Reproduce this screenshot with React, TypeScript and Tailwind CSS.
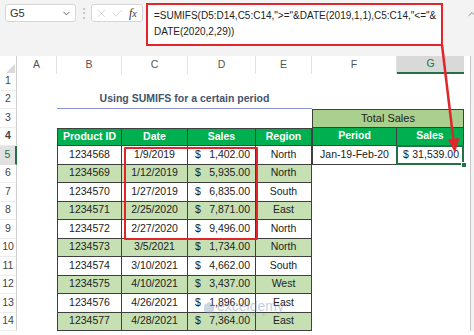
import { Check, ChevronDown, ChevronUp, X } from "lucide-react";

const data = [
  ["1234568", "1/9/2019", "1,402.00", "North"],
  ["1234569", "1/12/2019", "5,935.00", "North"],
  ["1234570", "1/27/2019", "6,835.00", "South"],
  ["1234571", "2/25/2020", "7,871.00", "East"],
  ["1234572", "2/27/2020", "9,496.00", "North"],
  ["1234573", "3/5/2021", "1,734.00", "North"],
  ["1234574", "3/10/2021", "4,662.00", "South"],
  ["1234575", "4/10/2021", "3,437.00", "West"],
  ["1234576", "4/26/2021", "1,896.00", "East"],
  ["1234577", "4/28/2021", "7,364.00", "East"],
];

const grid =
  "grid grid-cols-[17px_40px_65px_66px_68px_56px_85px_67px_6px_1px_1fr]";

function RowNum({ n, active }: { n: number; active?: boolean }) {
  return (
    <div
      className={
        active
          ? "flex items-center justify-center bg-[#e1e1e1] border-r-2 border-r-[#217346] border-b border-b-[#e1e1e1] text-[#217346]"
          : "flex items-center justify-center bg-white border-r border-r-[#cfcfcf] border-b border-b-[#ececec] text-[#444]"
      }
    >
      {n}
    </div>
  );
}

function Tail() {
  return (
    <>
      <div className="bg-white" />
      <div className="bg-[#c8c8c8]" />
      <div className="bg-[#f3f3f3]" />
    </>
  );
}

export default function App() {
  return (
    <div className="relative w-[474px] h-[335px] overflow-hidden bg-white font-['Liberation_Sans',Arial,sans-serif] text-[10.5px] text-[#222]">
      {/* formula bar */}
      <div className="h-[56px] bg-[#f3f3f3] flex items-start pt-[3px] pl-[5px]">
        <div className="mt-[1px] w-[71px] h-[18px] bg-white border border-[#d6d6d6] rounded-[3px] flex items-center justify-between pl-[4px] pr-[3px] text-[11px] text-[#333]">
          <span>G5</span>
          <ChevronDown size={11} strokeWidth={2} className="text-[#555]" />
        </div>
        <div className="w-[15px] mt-[2px] text-center text-[12px] leading-[16px] text-[#b5b5b5]">⋮</div>
        <div className="mt-[1px] w-[52px] h-[18px] bg-white border border-[#d6d6d6] rounded-[3px] flex items-center gap-[3px] pl-[3px]">
          <X size={13} strokeWidth={1.2} className="text-[#c4c4c4]" />
          <Check size={13} strokeWidth={1.2} className="text-[#c4c4c4]" />
          <span className="ml-[2px] font-['Liberation_Serif',serif] italic text-[12px] text-[#333]">
            f<span className="text-[10px]">x</span>
          </span>
        </div>
        <div className="ml-[3px] w-[297px] h-[43px] bg-white border-2 border-[#e0262b] pl-[6px] pt-[3px] text-[10px] leading-[16px] text-[#222] whitespace-pre">
          {'=SUMIFS(D5:D14,C5:C14,">="&DATE(2019,1,1),C5:C14,"<="&\nDATE(2020,2,29))'}
        </div>
        <ChevronUp size={12} strokeWidth={1.5} className="ml-auto mt-[5px] -mr-[4px] text-[#666]" />
      </div>

      {/* column headers */}
      <div className={`${grid} h-[16px] text-[#555] border-b border-[#c8c8c8]`}>
        <div className="relative bg-white border-r border-[#cfcfcf]">
          <svg className="absolute right-[1px] bottom-[1px]" width="9" height="9" viewBox="0 0 9 9">
            <path d="M9 0 L9 9 L0 9 Z" fill="#d9d9d9" />
          </svg>
        </div>
        {["A", "B", "C", "D", "E", "F"].map((c) => (
          <div key={c} className="flex items-center justify-center bg-white border-r border-[#e3e3e3]">
            {c}
          </div>
        ))}
        <div className="flex items-center justify-center bg-[#d9d9d9] border-b-2 border-[#217346] text-[#217346]">
          G
        </div>
        <Tail />
      </div>

      {/* row 1 */}
      <div className={`${grid} h-[18.5px]`}>
        <RowNum n={1} />
        <div className="col-span-7" />
        <Tail />
      </div>

      {/* row 2 title */}
      <div className={`${grid} h-[18.5px]`}>
        <RowNum n={2} />
        <div />
        <div className="col-span-4 flex items-center justify-center border-b border-[#8b93d8] font-bold text-[#44546a]">
          Using SUMIFS for a certain period
        </div>
        <div className="col-span-2" />
        <Tail />
      </div>

      {/* row 3 */}
      <div className={`${grid} h-[18.5px]`}>
        <RowNum n={3} />
        <div className="col-span-5" />
        <div className="col-span-2 flex items-center justify-center bg-[#a9d08e] border border-[#3f3f3f] text-[11px] text-[#222]">
          Total Sales
        </div>
        <Tail />
      </div>

      {/* row 4 headers */}
      <div className={`${grid} h-[18.5px] font-bold text-white`}>
        <RowNum n={4} />
        <div />
        <div className="flex items-center justify-center bg-[#00b050] border border-[#3f3f3f]">Product ID</div>
        <div className="flex items-center justify-center bg-[#00b050] border-y border-r border-[#3f3f3f]">Date</div>
        <div className="flex items-center justify-center bg-[#00b050] border-y border-r border-[#3f3f3f]">Sales</div>
        <div className="flex items-center justify-center bg-[#00b050] border-y border-r border-[#3f3f3f]">Region</div>
        <div className="flex items-center justify-center bg-[#00b050] border-x border-b border-[#3f3f3f]">Period</div>
        <div className="flex items-center justify-center bg-[#00b050] border-r border-b border-[#3f3f3f]">Sales</div>
        <Tail />
      </div>

      {/* data rows */}
      {data.map((r, i) => {
        const bg = i % 2 === 1 ? "bg-[#c6e0b4]" : "bg-white";
        const cell = `flex items-center border-r border-b border-[#3f3f3f] ${bg}`;
        return (
          <div key={r[0]} className={`${grid} h-[18.5px]`}>
            <RowNum n={i + 5} active={i === 0} />
            <div />
            <div className={`${cell} justify-center border-l`}>{r[0]}</div>
            <div className={`${cell} justify-center`}>{r[1]}</div>
            <div className={`${cell} justify-between pl-[7px] pr-[5px]`}>
              <span>$</span>
              <span>{r[2]}</span>
            </div>
            <div className={`${cell} justify-center`}>{r[3]}</div>
            {i === 0 ? (
              <>
                <div className="flex items-center justify-center border-x border-b border-[#3f3f3f]">Jan-19-Feb-20</div>
                <div className="relative flex items-center justify-between pl-[6px] pr-[4px] border-r border-b border-[#3f3f3f]">
                  <span>$</span>
                  <span>31,539.00</span>
                  <div className="absolute -left-[1px] -top-[1px] -right-[1px] -bottom-[1px] border-2 border-[#217346]" />
                  <div className="absolute -right-[4px] -bottom-[4px] w-[6px] h-[6px] bg-[#217346] border border-white" />
                </div>
              </>
            ) : (
              <div className="col-span-2" />
            )}
            <Tail />
          </div>
        );
      })}

      {/* watermark */}
      <div className="absolute left-[204px] top-[299px] flex items-center gap-[3px] opacity-40 pointer-events-none">
        <svg width="10" height="12" viewBox="0 0 10 12">
          <path d="M5 0 L10 3 L10 9 L5 12 L0 9 L0 3 Z" fill="#7f9bb8" />
        </svg>
        <div className="flex flex-col leading-none">
          <span className="text-[14px] text-[#6f8aa8]">exceldemy</span>
          <span className="text-[4px] tracking-[1px] text-[#6f8aa8]">EXCEL · DATA · BI</span>
        </div>
      </div>

      {/* annotation box */}
      <div className="absolute left-[124px] top-[147px] w-[134px] h-[93px] border-2 border-[#e0262b] rounded-[1px] pointer-events-none" />

      {/* arrow */}
      <svg className="absolute left-0 top-0 pointer-events-none" width="474" height="335">
        <line x1="442" y1="45" x2="453.3" y2="139" stroke="#e0262b" strokeWidth="2.5" />
        <path d="M455 153 L459.5 138 L448 139.5 Z" fill="#e0262b" />
      </svg>
    </div>
  );
}
